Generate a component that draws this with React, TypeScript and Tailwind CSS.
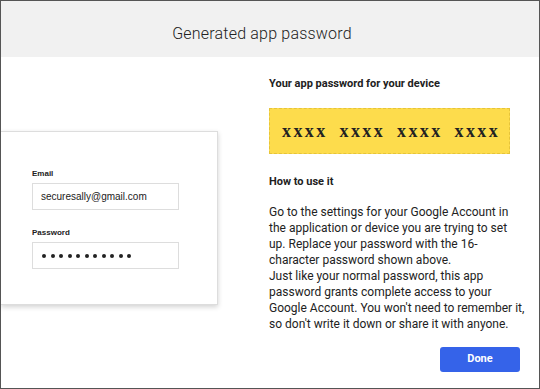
const App = () => {
  return (
    <div className="w-[540px] h-[389px] border border-[#555] bg-white flex flex-col overflow-hidden font-['Roboto',sans-serif] text-[#212121]">
      {/* Header */}
      <div className="h-[56px] shrink-0 bg-[#f1f1f1] flex items-center justify-center pt-[9px] pr-[16px]">
        <h1 className="text-[16px] font-light text-[#222] tracking-[0.2px]">Generated app password</h1>
      </div>

      <div className="flex flex-1">
        {/* Left: sign-in card illustration */}
        <div className="w-[268px] shrink-0">
          <div className="mt-[74px] w-[217px] h-[174px] bg-white border border-[#ddd] border-l-0 shadow-[0_2px_5px_rgba(0,0,0,0.18)] pl-[31px] pt-[37px] font-['Liberation_Sans',sans-serif]">
            <div className="text-[8px] font-bold text-[#222] leading-[10px]">Email</div>
            <div className="mt-[4px] w-[147px] h-[27px] border border-[#ddd] flex items-center pl-[8px] text-[10px] text-[#222]">
              securesally@gmail.com
            </div>
            <div className="mt-[18px] text-[8px] font-bold text-[#222] leading-[10px]">Password</div>
            <div className="mt-[4px] w-[147px] h-[27px] border border-[#ddd] flex items-center pl-[9px] gap-[4.5px]">
              {Array.from({ length: 11 }).map((_, i) => (
                <span key={i} className="w-[4px] h-[4px] rounded-full bg-[#222]" />
              ))}
            </div>
          </div>
        </div>

        {/* Right: password and instructions */}
        <div className="w-[262px] pt-[20px] flex flex-col">
          <h2 className="text-[11px] font-bold leading-[14px]">Your app password for your device</h2>
          <div className="mt-[17px] w-[241px] h-[46px] bg-[#fddc4c] border border-dashed border-[#e6c43a] flex items-center pl-[12px] font-['Liberation_Serif',serif] font-bold text-[18px] tracking-[2.4px] [word-spacing:5px] text-[#222]">
            xxxx xxxx xxxx xxxx
          </div>
          <h2 className="mt-[21px] text-[11px] font-bold leading-[14px]">How to use it</h2>
          <p className="mt-[15px] w-[256px] text-[12px] leading-[16px] text-[#222]">
            Go to the settings for your Google Account in the application or device you are trying to set up. Replace your password with the 16-character password shown above.
            <br />
            Just like your normal password, this app password grants complete access to your Google Account. You won't need to remember it, so don't write it down or share it with anyone.
          </p>
          <div className="mt-[15px] flex justify-end pr-[11px]">
            <button className="w-[80px] h-[25px] rounded-[3px] bg-[#3563e9] text-white text-[11px] font-bold">
              Done
            </button>
          </div>
        </div>
      </div>
    </div>
  );
};

export default App;
